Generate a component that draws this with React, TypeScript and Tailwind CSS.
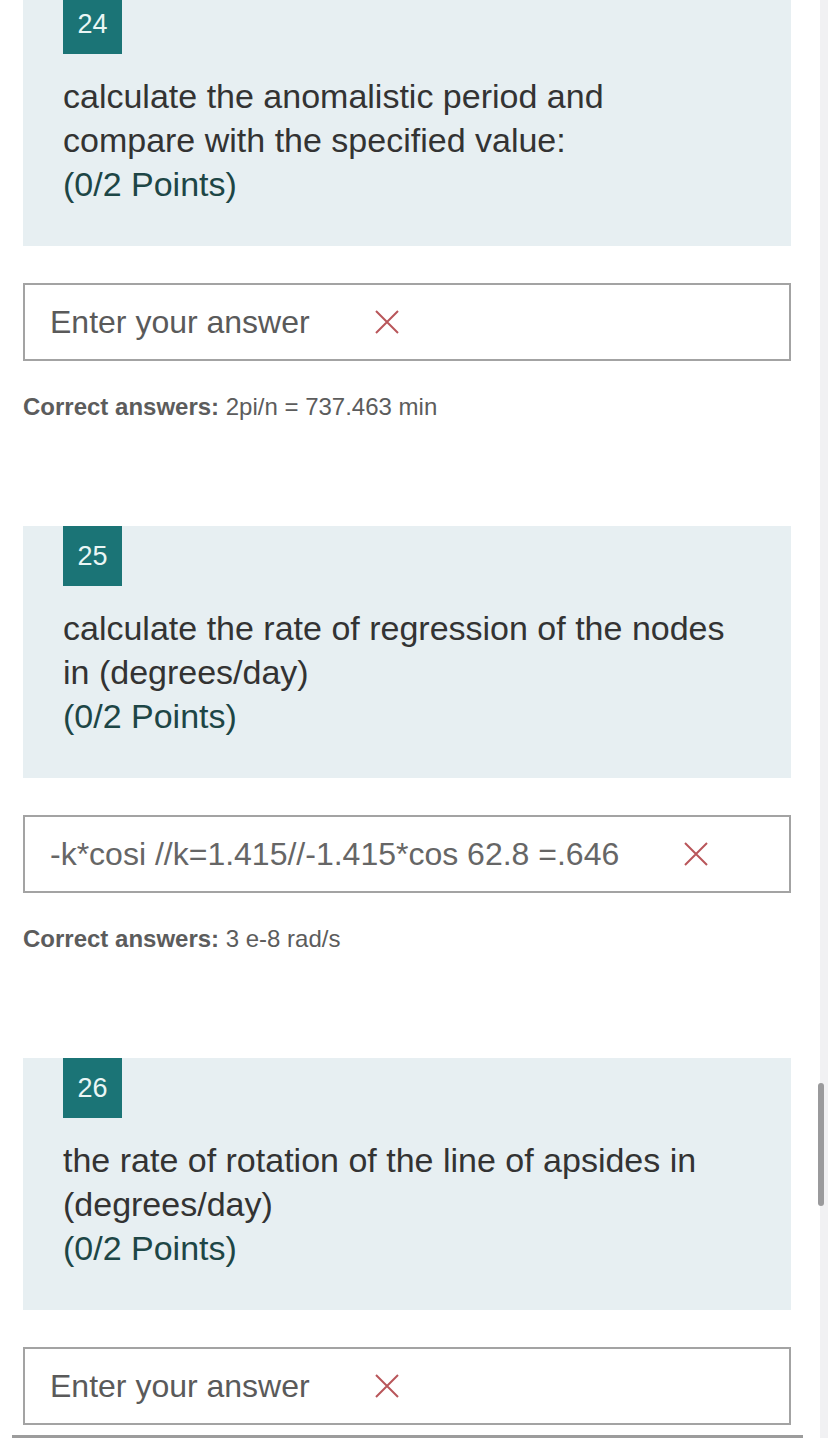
import React from 'react';

type Question = {
  num: number;
  lines: string[];
  answer: string;
  placeholder: boolean;
  correct: string;
};

const questions: Question[] = [
  {
    num: 24,
    lines: ['calculate the anomalistic period and', 'compare with the specified value:'],
    answer: 'Enter your answer',
    placeholder: true,
    correct: '2pi/n = 737.463 min',
  },
  {
    num: 25,
    lines: ['calculate the rate of regression of the nodes', 'in (degrees/day)'],
    answer: '-k*cosi //k=1.415//-1.415*cos 62.8 =.646',
    placeholder: false,
    correct: '3 e-8 rad/s',
  },
  {
    num: 26,
    lines: ['the rate of rotation of the line of apsides in', '(degrees/day)'],
    answer: 'Enter your answer',
    placeholder: true,
    correct: '',
  },
];

function WrongMark() {
  return (
    <svg width="26" height="26" viewBox="0 0 26 26" className="ml-[64px] shrink-0">
      <path d="M2 2 L24 24 M24 2 L2 24" stroke="#b9565a" strokeWidth="2" fill="none" />
    </svg>
  );
}

function QuestionItem({ q }: { q: Question }) {
  return (
    <div>
      <div className="bg-[#e7eff2] h-[252px] pl-[40px]">
        <div className="w-[59px] h-[60px] bg-[#1b7476] text-[#eaf6f5] text-[27px] flex items-center justify-center">
          {q.num}
        </div>
        <div className="mt-[20px] text-[34px] leading-[44px]">
          {q.lines.map((l) => (
            <div key={l} className="text-[#333333]">{l}</div>
          ))}
          <div className="text-[#1d4646]">(0/2 Points)</div>
        </div>
      </div>
      <div className="mt-[37px] h-[78px] border-2 border-[#a3a3a3] bg-white flex items-center pl-[25px]">
        <span className={`text-[32px] ${q.placeholder ? 'text-[#5a5a5a]' : 'text-[#666666]'}`}>{q.answer}</span>
        <WrongMark />
      </div>
      {q.correct && (
        <div className="mt-[33px] text-[24px] leading-[26px] text-[#5c5c5c]">
          <span className="font-bold">Correct answers:</span> {q.correct}
        </div>
      )}
    </div>
  );
}

export default function App() {
  return (
    <div className="w-[828px] h-[1438px] overflow-hidden bg-white flex font-['Liberation_Sans',Arial,sans-serif]">
      <div className="flex-1 relative">
        <div className="-mt-[6px] pl-[23px] pr-[29px] flex flex-col gap-[106px]">
          {questions.map((q) => (
            <QuestionItem key={q.num} q={q} />
          ))}
        </div>
        <div className="absolute left-[12px] top-[1435px] w-[791px] h-[4px] bg-[#9c9c9c]" />
        <div className="absolute right-[-4px] top-[1083px] w-[6px] h-[123px] rounded-[3px] bg-[#9a9a9c]" />
      </div>
      <div className="w-[8px] bg-[#f1f1f3]" />
    </div>
  );
}
